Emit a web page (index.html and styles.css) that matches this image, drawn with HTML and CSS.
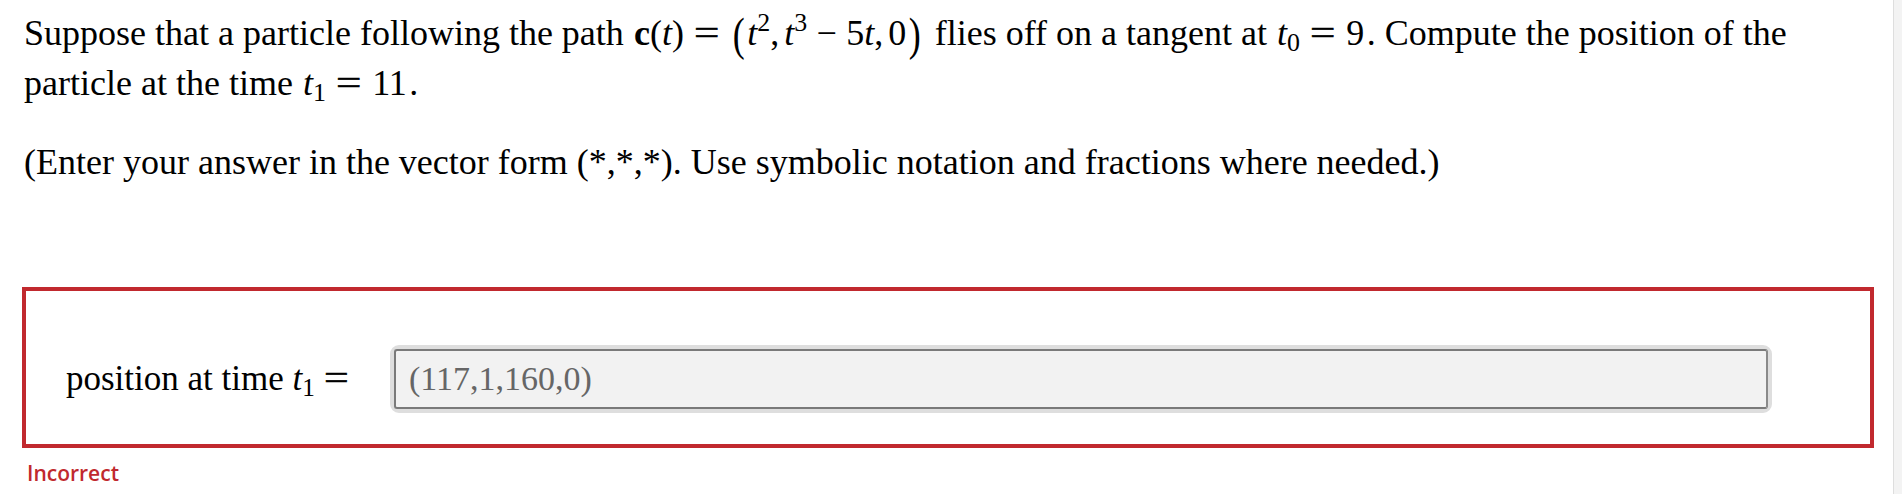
FILE: index.html
```html
<!DOCTYPE html>
<html lang="en">
<head>
<meta charset="utf-8">
<title>Question</title>
<link rel="stylesheet" href="styles.css">
</head>
<body>
<div class="page">
  <p class="q">Suppose that a particle following the path <span class="m"><b class="bf">c</b>(<i>t</i>)<span class="eq">=</span><span class="bp">(</span><i>t</i><sup>2</sup>,<span class="thin"></span><i>t</i><sup>3</sup><span class="op">−</span>5<i>t</i>,<span class="thin"></span>0<span class="bp">)</span></span> flies off on a tangent at <span class="m"><i>t</i><sub>0</sub><span class="eq">=</span>9</span>. Compute the position of the particle at the time <span class="m"><i>t</i><sub>1</sub><span class="eq">=</span>11</span>.</p>
  <p class="q">(Enter your answer in the vector form (*,*,*). Use symbolic notation and fractions where needed.)</p>
  <div class="answer">
    <div class="row">
      <span class="label">position at time <span class="m"><i>t</i><sub>1</sub><span class="eq">=</span></span></span>
      <div class="field"><div class="inp">(117,1,160,0)</div></div>
    </div>
  </div>
  <div class="status">Incorrect</div>
</div>
</body>
</html>
```

FILE: styles.css
```css
html, body {
  margin: 0;
  padding: 0;
}
html {
  background: #f3f3f3;
}
body {
  font-family: "Liberation Serif", "Times New Roman", serif;
  color: #000;
}
.page {
  box-sizing: border-box;
  width: 1894px;
  min-height: 494px;
  background: #fff;
  border-right: 1px solid #dedede;
  padding: 8px 20px 0 22px;
}
.q {
  font-size: 36px;
  line-height: 50px;
  margin: 0 0 29px 2px;
}
.q + .q {
  margin-bottom: 100px;
}
.q .m {
  margin: 0 0.07em 0 0.03em;
}
.m i {
  font-style: italic;
}
.bf {
  font-weight: bold;
}
sup, sub {
  font-size: 0.72em;
  line-height: 0;
}
sup {
  vertical-align: 0.55em;
}
sub {
  vertical-align: -0.22em;
}
.eq {
  display: inline-block;
  margin: 0 0.34em 0 0.3em;
  transform: scaleX(1.25);
  padding: 0 0.04em;
  -webkit-text-stroke: 0.6px #000;
}
.op {
  margin: 0 0.26em;
}
.thin {
  display: inline-block;
  width: 0.14em;
}
.bp {
  display: inline-block;
  transform: scaleY(1.3) translateY(0.04em);
  margin: 0 0.07em;
}
.answer {
  box-sizing: border-box;
  width: 1852px;
  height: 161px;
  border: 4px solid #c1292e;
  padding: 54px 0 31px 40px;
}
.row {
  display: flex;
  align-items: center;
}
.label {
  font-size: 35px;
  white-space: nowrap;
  flex: none;
}
.label .eq {
  margin-right: 0;
}
.field {
  box-sizing: border-box;
  width: 1382px;
  height: 68px;
  border: 4px solid #dedede;
  border-radius: 9px;
  margin-left: 42px;
}
.inp {
  box-sizing: border-box;
  height: 60px;
  background: #f2f2f2;
  border: 2px solid #7a7a7a;
  border-right-color: #8a8a8a;
  border-radius: 3px;
  padding-left: 13px;
  font-size: 34px;
  line-height: 56px;
  color: #666;
}
.status {
  font-family: "Open Sans", "Liberation Sans", sans-serif;
  font-weight: 600;
  font-size: 21px;
  line-height: 30px;
  color: #c1292e;
  margin-top: 10px;
  padding-left: 5px;
}
```
